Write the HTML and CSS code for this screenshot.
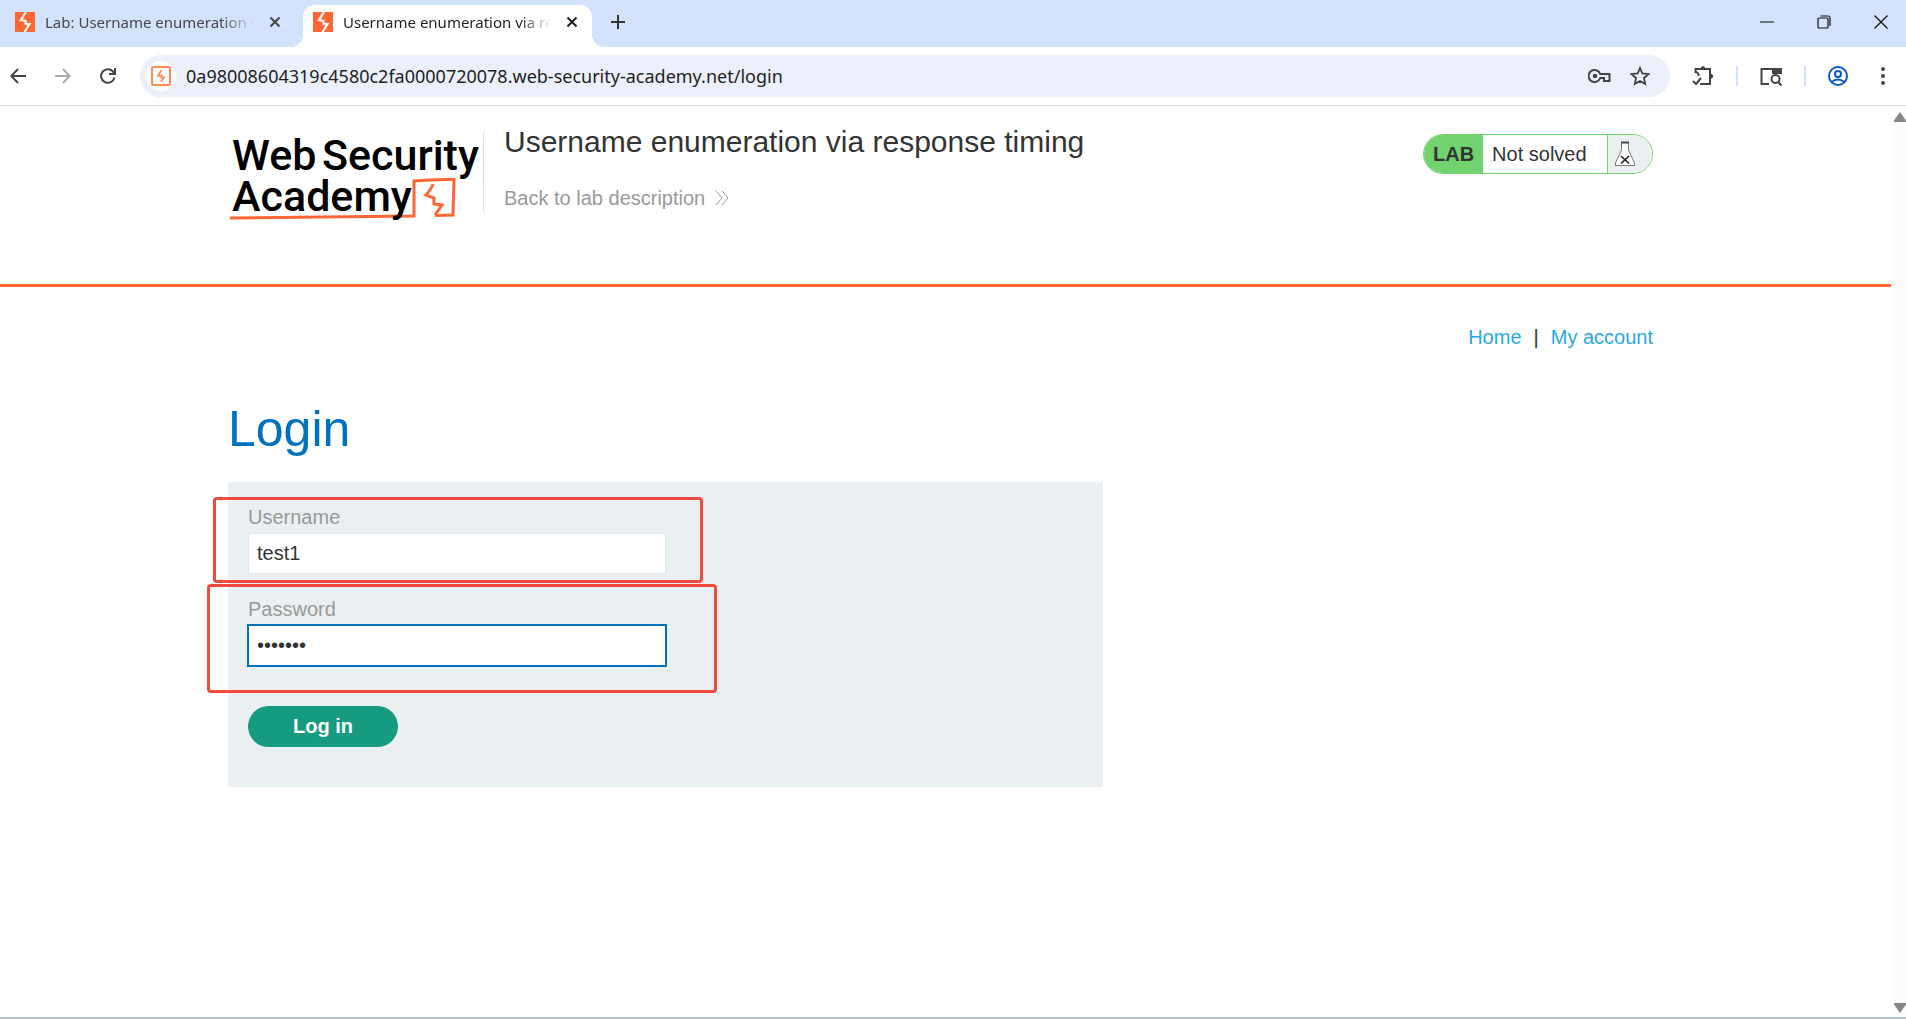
FILE: index.html
```html
<!DOCTYPE html>
<html lang="en">
<head>
<meta charset="utf-8">
<title>Username enumeration via response timing</title>
<link rel="stylesheet" href="styles.css">
</head>
<body>
<svg class="defs" width="0" height="0" aria-hidden="true">
  <symbol id="favicon" viewBox="0 0 20 20"><rect width="20" height="20" fill="#ff6633"/><path d="M11 0 6 8l4.500 1v3h4L9.500 20" fill="none" stroke="#fff" stroke-width="2.200"/></symbol>
  <symbol id="cross" viewBox="0 0 12 12"><path d="M1.500 1.500l9 9m0-9l-9 9" fill="none" stroke="currentColor" stroke-width="2"/></symbol>
</svg>
<div class="browser">
  <header class="chrome">
    <div class="tabs">
      <div class="tab">
        <svg class="tab-icon"><use href="#favicon"/></svg>
        <span class="tab-title">Lab: Username enumeration v</span>
        <button class="tab-close" aria-label="Close tab"><svg width="12" height="12"><use href="#cross"/></svg></button>
      </div>
      <div class="tab tab-active">
        <svg class="tab-icon"><use href="#favicon"/></svg>
        <span class="tab-title">Username enumeration via re</span>
        <button class="tab-close" aria-label="Close tab"><svg width="12" height="12"><use href="#cross"/></svg></button>
      </div>
      <button class="new-tab" aria-label="New tab"><svg width="14" height="14" viewBox="0 0 14 14"><path d="M7 0v14M0 7h14" stroke="#333" stroke-width="2"/></svg></button>
      <div class="window-controls">
        <button aria-label="Minimize"><svg width="14" height="14" viewBox="0 0 14 14"><path d="M0 7h14" stroke="#6b7480" stroke-width="2"/></svg></button>
        <button aria-label="Restore"><svg width="14" height="14" viewBox="0 0 14 14" fill="none" stroke="#111" stroke-width="1.200"><rect x="1" y="3" width="10" height="10" rx="1"/><path d="M3.500 1H11q2 0 2 2v8"/></svg></button>
        <button aria-label="Close"><svg width="14" height="14" viewBox="0 0 14 14"><path d="M.5.5l13 13m0-13l-13 13" stroke="#111" stroke-width="1.300"/></svg></button>
      </div>
    </div>
    <div class="toolbar">
      <button class="nav-button" aria-label="Back"><svg width="16" height="16" viewBox="0 0 16 16"><path d="M16 8H2M8 1 1.300 8 8 15" fill="none" stroke="#444" stroke-width="2"/></svg></button>
      <button class="nav-button" aria-label="Forward"><svg width="16" height="16" viewBox="0 0 16 16"><path d="M0 8h14M8 1l6.700 7L8 15" fill="none" stroke="#aaa" stroke-width="2"/></svg></button>
      <button class="nav-button" aria-label="Reload"><svg width="16" height="16" viewBox="0 0 16 16"><path d="M14.500 9.500A6.800 6.800 0 1 1 13.500 4.200L14.500 5.500M15 0v6H9" fill="none" stroke="#444" stroke-width="2"/></svg></button>
      <div class="address">
        <span class="site-icon"><svg width="20" height="20" viewBox="0 0 20 20" fill="none" stroke="#ff8a5c"><rect x="1" y="1" width="18" height="18" rx="1.500" stroke-width="2"/><path d="M10.500 4 7 9.500h3.500v2H13l-3 4.500" stroke-width="1.800"/></svg></span>
        <input class="url" type="text" aria-label="Address" value="0a98008604319c4580c2fa0000720078.web-security-academy.net/login">
        <button aria-label="Manage passwords"><svg width="24" height="16" viewBox="0 0 24 16" fill="none" stroke="#444" stroke-width="2"><path d="M12.200 6A6 6 0 1 0 12.200 10H16v3h5.500V6z"/><circle cx="7" cy="8" r="2.300" fill="#444" stroke="none"/></svg></button>
        <button aria-label="Bookmark this page"><svg width="20" height="20" viewBox="0 0 20 20"><path d="M10 2 12.300 7.300 18.500 8 13.900 12 15.200 18 10 15 4.800 18 6.100 12 1.500 8 7.700 7.300z" fill="none" stroke="#444" stroke-width="1.800"/></svg></button>
      </div>
      <div class="actions">
        <button aria-label="Extensions"><svg width="22" height="20" viewBox="0 0 22 20" fill="none" stroke="#444" stroke-width="2"><path d="M3.500 7V3H18v15H8"/><path d="M3.500 6q3.500.5 3 4M1 15l3 3 5-6"/><path d="M9 2a2.200 2.200 0 0 1 4 0zM19.500 8.300a2.200 2.200 0 0 1 0 4z" fill="#444" stroke-width="1"/></svg></button>
        <span class="divider"></span>
        <button aria-label="Search tabs"><svg width="22" height="20" viewBox="0 0 22 20" fill="none" stroke="#444" stroke-width="2"><path d="M9 18H1.500V3H21v4"/><path d="M13 3h8v4h-8z" fill="#444"/><circle cx="15.500" cy="13" r="4"/><path d="M18 16l3.500 3.500"/></svg></button>
        <span class="divider"></span>
        <button aria-label="Profile"><svg width="20" height="20" viewBox="0 0 20 20" fill="none" stroke="#0b57d0" stroke-width="2"><circle cx="10" cy="10" r="9"/><circle cx="10" cy="8" r="3"/><path d="M3.500 16q6.500-5 13 0"/></svg></button>
        <button class="menu" aria-label="Menu"><svg width="4" height="18" viewBox="0 0 4 18" fill="#444"><circle cx="2" cy="2" r="2"/><circle cx="2" cy="9" r="2"/><circle cx="2" cy="16" r="2"/></svg></button>
      </div>
    </div>
  </header>
  <div class="viewport">
    <div class="page">
      <section class="lab-header">
        <div class="container lab-row">
          <svg class="logo" width="255" height="94" viewBox="0 0 255 94" role="img" aria-label="Web Security Academy">
            <path d="M2 86q80-.5 184-2V49q20-2 40-1.500l-1 35.500-18 .500" fill="none" stroke="#ff6633" stroke-width="3"/>
            <path d="M205 52q-1 4-7 11l8 3v6l8 1-7 10" fill="none" stroke="#ff6633" stroke-width="3"/>
            <text class="logo-text" x="4" y="38">Web</text>
            <text class="logo-text" x="94" y="38">Security</text>
            <text class="logo-text" x="4" y="79">Academy</text>
          </svg>
          <div class="lab-title">
            <h2>Username enumeration via response timing</h2>
            <a href="#">Back to lab description <svg width="14" height="16" viewBox="0 0 14 16"><path d="M1 1l6 7-6 7M7 1l6 7-6 7" fill="none" stroke="#999" stroke-width="1"/></svg></a>
          </div>
          <div class="status">
            <strong>LAB</strong>
            <span class="status-text">Not solved</span>
            <span class="status-icon"><svg width="22" height="26" viewBox="0 0 22 26" fill="none" stroke="#444"><path d="M7.500 1.500v7.500L1.500 22v2.500h19V22L14.500 9V1.500z" fill="#fff" stroke="#777" stroke-width="1"/><path d="M7 1.500h8" stroke-width="2"/><path d="M7 15l8 7.500M15 15l-8 7.500" stroke="#222" stroke-width="1.700"/></svg></span>
          </div>
        </div>
      </section>
      <main class="container">
        <nav><a href="#">Home</a><span>|</span><a href="#">My account</a></nav>
        <h1>Login</h1>
        <form class="login">
          <div class="field">
            <label for="username">Username</label>
            <input id="username" type="text" value="test1">
            <span class="mark mark-user"></span>
          </div>
          <div class="field">
            <label for="password">Password</label>
            <input id="password" class="focused" type="password" value="testing">
            <span class="mark mark-pass"></span>
          </div>
          <button class="submit" type="button">Log in</button>
        </form>
      </main>
    </div>
    <div class="scrollbar">
      <svg width="12" height="10" viewBox="0 0 12 10"><path d="M6 0l6 8.500v1.500H0V8.500z" fill="#868686"/></svg>
      <svg width="12" height="10" viewBox="0 0 12 10"><path d="M6 10l6-8.500V0H0v1.500z" fill="#868686"/></svg>
    </div>
  </div>
</div>
</body>
</html>
```
FILE: styles.css
```css
* { box-sizing: border-box; }
body { margin: 0; font-family: "Liberation Sans", Arial, sans-serif; font-size: 20px; color: #333; background: #fff; }
button { border: 0; padding: 0; background: none; font: inherit; color: inherit; display: flex; align-items: center; justify-content: center; }
a { text-decoration: none; }
svg { flex: none; }
.defs { position: absolute; }
.browser { display: flex; flex-direction: column; min-height: 100vh; border-bottom: 2px solid #afc3d4; }

/* Browser tabs */
.tabs { display: flex; height: 47px; padding-top: 5px; background: #d3e2fd; font-family: "Noto Sans", sans-serif; font-size: 15px; }
.tab { display: flex; align-items: center; width: 303px; padding: 0 22px 8px 15px; color: #474747; }
.tab-active { position: relative; width: 289px; padding: 0 14px 8px 10px; background: #fff; border-radius: 12px 12px 0 0; color: #1f1f1f; }
.tab-active::before, .tab-active::after { content: ""; position: absolute; bottom: 0; width: 12px; height: 12px; }
.tab-active::before { left: -12px; background: radial-gradient(circle at 0 0, transparent 12px, #fff 12px); }
.tab-active::after { right: -12px; background: radial-gradient(circle at 100% 0, transparent 12px, #fff 12px); }
.tab-icon { width: 20px; height: 20px; margin-right: 10px; }
.tab-title { flex: 1; min-width: 0; overflow: hidden; white-space: nowrap; margin-right: 15px; mask-image: linear-gradient(to left, transparent, #000 32px); }
.tab-close { width: 12px; height: 20px; }
.new-tab { width: 52px; padding-bottom: 8px; }
.window-controls { display: flex; gap: 43px; margin-left: auto; padding: 0 18px 8px 0; }

/* Browser toolbar */
.toolbar { display: flex; align-items: center; height: 59px; padding: 0 21px 0 10px; border-bottom: 1px solid #dcdcdc; }
.nav-button { width: 16px; height: 16px; margin-right: 29px; }
.nav-button + .nav-button + .nav-button { margin-right: 24px; }
.address { flex: 1; display: flex; align-items: center; height: 42px; padding: 0 20px 0 6px; gap: 18px; border-radius: 21px; background: #ebf0fa; }
.site-icon { display: flex; align-items: center; justify-content: center; width: 30px; height: 30px; border-radius: 50%; background: #fff; }
.url { flex: 1; min-width: 0; margin-left: -8px; border: 0; padding: 0; background: none; font-family: "Noto Sans", sans-serif; font-size: 18px; color: #1f1f1f; }
.actions { display: flex; align-items: center; gap: 22px; margin-left: 22px; }
.menu { margin-left: 11px; }
.divider { width: 2px; height: 20px; background: #d3e2fd; }

/* Web page */
.viewport { flex: 1; display: flex; }
.page { flex: 1; min-width: 0; padding-right: 10px; }
.container { width: 76%; max-width: 1425px; margin: 0 auto; }
.lab-header { height: 181px; margin-right: -10px; padding-right: 10px; border-bottom: 3px solid #ff6633; }
.lab-row { display: flex; align-items: flex-start; padding-top: 26px; }
.logo-text { font-family: Roboto, sans-serif; font-weight: 500; font-size: 43px; fill: #000; }
.lab-title { flex: 1; height: 80px; padding-left: 20px; border-left: 1px solid #ddd; }
.lab-title h2 { margin: -8px 0 0; font-weight: 400; font-size: 30px; line-height: 36px; }
.lab-title a { display: flex; align-items: center; gap: 10px; margin-top: 26px; line-height: 24px; color: #999; }
.status { display: flex; height: 40px; width: 230px; margin-top: 2px; border: 1px solid #70d36d; border-radius: 20px; overflow: hidden; line-height: 38px; }
.status strong { padding: 0 9px; background: #70d36d; }
.status-text { flex: 1; padding-left: 9px; }
.status-icon { display: flex; align-items: center; width: 45px; padding-left: 6px; border-left: 1px solid #70d36d; background: #eaf0f2; }
nav { display: flex; justify-content: flex-end; gap: 12px; padding-top: 38px; line-height: 24px; }
nav a { color: #29a7e6; }
h1 { margin: 50px 0 23px; font-weight: 400; font-size: 50px; line-height: 60px; color: #0071bd; }
.login { width: 875px; max-width: 100%; padding: 20px 20px 40px; background: #eaf0f2; }
.field { position: relative; width: 418px; margin-bottom: 20px; }
.field label { display: block; height: 31px; line-height: 30px; color: #999; }
.field input { display: block; width: 100%; height: 41px; padding: 0 8px; border: 1px solid #e3e6e8; background: #fff; font: inherit; color: #333; }
.field .focused { border-color: #0071bd; outline: 1px solid #0071bd; }
.mark { position: absolute; border: 3px solid #f24a3d; border-radius: 4px; pointer-events: none; }
.mark-user { left: -35px; right: -37px; top: -5px; height: 86px; }
.mark-pass { left: -41px; right: -51px; top: -10px; height: 109px; }
.submit { width: 150px; height: 41px; margin-top: 40px; border-radius: 21px; background: #169b80; color: #fff; font-weight: 700; }
.scrollbar { display: flex; flex-direction: column; align-items: flex-end; justify-content: space-between; width: 15px; padding: 6px 0 4px; background: #fcfcfc; }
```
